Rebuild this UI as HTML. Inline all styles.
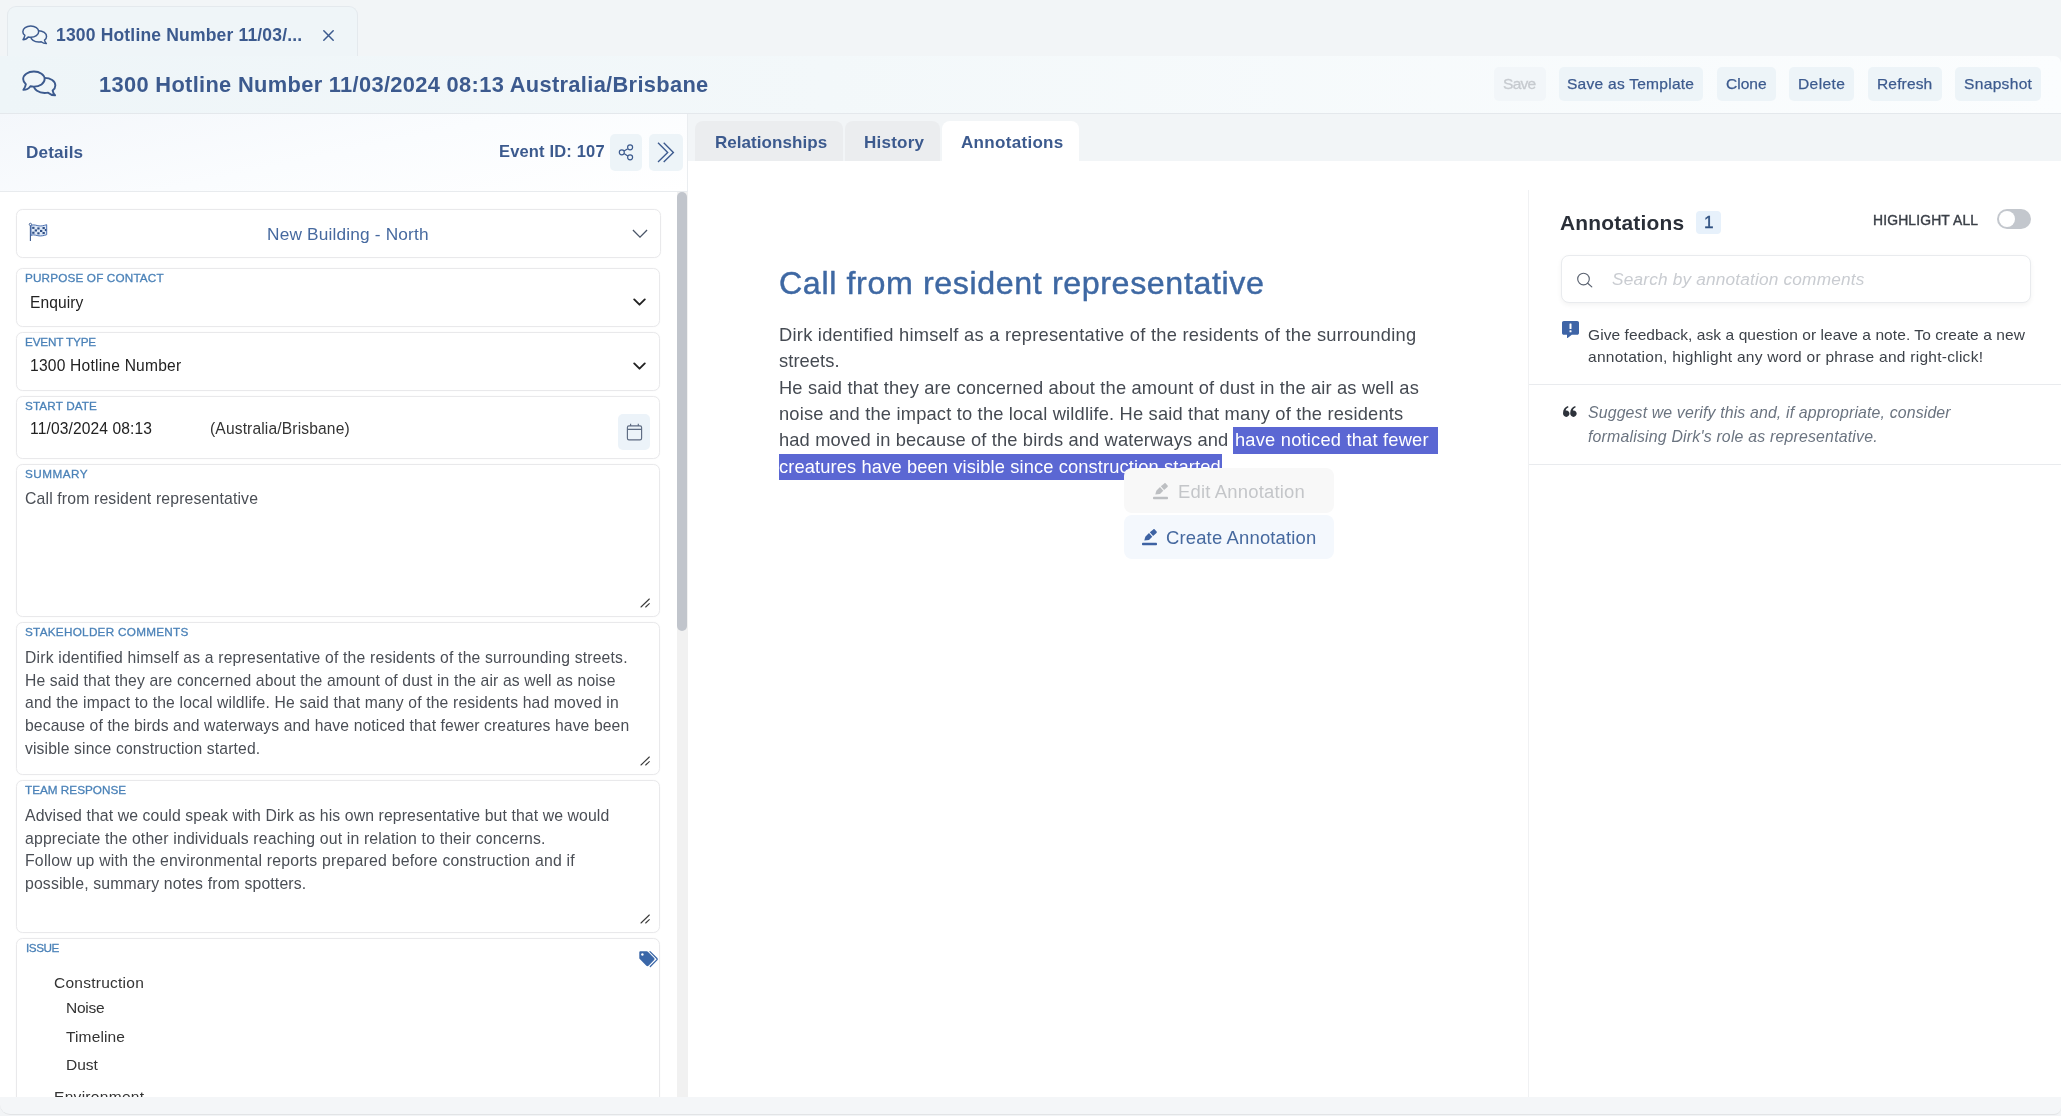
<!DOCTYPE html>
<html lang="en">
<head>
<meta charset="utf-8">
<title>1300 Hotline Number 11/03/2024 08:13 Australia/Brisbane</title>
<style>
*{box-sizing:border-box;margin:0;padding:0}
html,body{width:2061px;height:1116px;overflow:hidden}
body{position:relative;background:#f2f5f7;font-family:"Liberation Sans",Arial,sans-serif;color:#333}
.abs{position:absolute}
.t{position:absolute;white-space:nowrap;display:block;z-index:2;will-change:transform}
#m_edit,#m_create{z-index:6}
#cover{left:0;top:1097.3px;width:2061px;height:18.7px;background:#f2f4f6;z-index:8}
#cover i{position:absolute;left:0;top:0;width:2060.5px;height:17.5px;background:#f4f6f8;border-bottom:1px solid #e2e4e6;border-radius:0 0 7px 10px}
svg{position:absolute;overflow:visible}
#toptab{left:7px;top:6px;width:351px;height:52px;background:#eff5f8;border:1px solid #e4e9ed;border-bottom:none;border-radius:9px 9px 0 0}
#header{left:0;top:55.5px;width:2060.5px;height:58px;background:linear-gradient(90deg,#eef5f8 0%,#f3f8fa 40%,#fbfdfe 100%);border-bottom:1px solid #e4e8ec;border-radius:0 7px 0 0}
.btn{position:absolute;top:66.5px;height:34px;border-radius:5px;background:#edf4f8}
#main{left:0;top:114px;width:2060.5px;height:983.3px;background:#fff;overflow:hidden}
#leftpanel{left:0;top:0;width:688px;height:984px;border-right:1px solid #eaedf0;background:#fff}
#dethead{left:0;top:0;width:687px;height:77.5px;background:linear-gradient(168deg,#f4f7fb 0%,#fafcfe 50%,#ffffff 100%);border-bottom:1px solid #e8ebee}
.ibtn{position:absolute;top:20px;height:36.5px;border-radius:5px;background:#edf4f8}
.box{position:absolute;left:16px;width:643.5px;border:1px solid #e9e9eb;border-radius:6.5px;background:#fff;box-shadow:0 0 2px rgba(0,0,0,.03)}
#track{left:676.6px;top:78px;width:11px;height:905px;background:#f1f1f1}
#thumb{left:676.8px;top:78px;width:10px;height:439px;background:#c1c5cc;border-radius:5px}
#tabstrip{left:688px;top:0;width:1373px;height:47px;background:#f2f5f7}
.tab{position:absolute;top:7.2px;height:40px;border-radius:8px 8px 0 0;background:#ebedef}
.tab.on{background:#fff}
#vdiv{left:1528px;top:76px;width:1px;height:907px;background:#f0f1f3}
.hdiv{position:absolute;left:1529px;width:532px;height:1px;background:#e9ebee}
.hl{position:absolute;background:#5b67d3}
.menu{z-index:5;position:absolute;left:1123.5px;width:210.5px;border-radius:8px}
#search{left:1560.5px;top:254.5px;width:470px;height:48.5px;border:1px solid #e9ebee;border-radius:8px;background:#fff;box-shadow:0 2px 5px rgba(0,0,0,.05)}
#badge{left:1696px;top:210.5px;width:25px;height:23.5px;border-radius:4px;background:#e7f1fb}
#toggle{left:1997px;top:209px;width:33.5px;height:20px;border-radius:10px;background:#c3c7cd}
#knob{left:1999px;top:210.8px;width:16px;height:16px;border-radius:50%;background:#fff}
</style>
</head>
<body>
<!-- top document tab -->
<div class="abs" id="toptab"></div>
<!-- header bar -->
<div class="abs" id="header"></div>
<div class="btn" style="left:1493.5px;width:52px;background:#f2f6f9"></div>
<div class="btn" style="left:1558.5px;width:144.5px"></div>
<div class="btn" style="left:1716.5px;width:59.5px"></div>
<div class="btn" style="left:1788.5px;width:65.5px"></div>
<div class="btn" style="left:1867.5px;width:74px"></div>
<div class="btn" style="left:1955px;width:85.5px"></div>

<!-- main area -->
<div class="abs" id="main">
  <div class="abs" id="tabstrip">
    <div class="tab" style="left:7px;width:147.5px"></div>
    <div class="tab" style="left:157px;width:95px"></div>
    <div class="tab on" style="left:253.5px;width:137.5px"></div>
  </div>
  <div class="abs" id="leftpanel">
    <div class="abs" id="dethead">
      <div class="ibtn" style="left:609.5px;width:32.5px"></div>
      <div class="ibtn" style="left:648.5px;width:34.5px"></div>
    </div>
    <div class="box" style="top:95px;height:49px;left:15.5px;width:645.5px"></div>
    <div class="box" style="top:154px;height:58.5px"></div>
    <div class="box" style="top:218px;height:58.5px"></div>
    <div class="box" style="top:282px;height:62.5px"></div>
    <div class="box" style="top:349.5px;height:153px"></div>
    <div class="box" style="top:507.5px;height:153px"></div>
    <div class="box" style="top:665.5px;height:153px"></div>
    <div class="box" style="top:823.5px;height:200px"></div>
    <div class="abs" style="left:618.3px;top:299.7px;width:32px;height:36.6px;border-radius:5px;background:#ecf3f9"></div>
    <div class="abs" id="track"></div>
    <div class="abs" id="thumb"></div>
  </div>
  <div class="abs" id="vdiv"></div>
  <div class="hdiv" style="top:270px"></div>
  <div class="hdiv" style="top:350px"></div>
</div>

<!-- selection highlight -->
<div class="hl" style="left:1233px;top:427px;width:205px;height:26.5px"></div>
<div class="hl" style="left:779px;top:453.5px;width:442.7px;height:26.3px"></div>

<span class="t" id="tabtxt" style="left:56.00px;top:25.00px;font-size:17.53px;line-height:20px;color:#3c5a8e;letter-spacing:0.168px;font-weight:bold;">1300 Hotline Number 11/03/...</span>
<span class="t" id="title" style="left:99.40px;top:72.00px;font-size:21.84px;line-height:25px;color:#3c5a8e;letter-spacing:0.333px;font-weight:bold;">1300 Hotline Number 11/03/2024 08:13 Australia/Brisbane</span>
<span class="t" id="b_save" style="left:1502.60px;top:75.00px;font-size:15.55px;line-height:17px;color:#c6cacf;letter-spacing:-0.740px;-webkit-text-stroke:0.30px #c6cacf;">Save</span>
<span class="t" id="b_sat" style="left:1567.40px;top:75.00px;font-size:15.55px;line-height:17px;color:#3c5a8e;letter-spacing:0.246px;-webkit-text-stroke:0.25px #3c5a8e;">Save as Template</span>
<span class="t" id="b_clone" style="left:1725.80px;top:75.00px;font-size:15.55px;line-height:17px;color:#3c5a8e;letter-spacing:0.001px;-webkit-text-stroke:0.25px #3c5a8e;">Clone</span>
<span class="t" id="b_del" style="left:1798.00px;top:75.00px;font-size:15.55px;line-height:17px;color:#3c5a8e;letter-spacing:0.377px;-webkit-text-stroke:0.25px #3c5a8e;">Delete</span>
<span class="t" id="b_ref" style="left:1876.70px;top:75.00px;font-size:15.55px;line-height:17px;color:#3c5a8e;letter-spacing:0.132px;-webkit-text-stroke:0.25px #3c5a8e;">Refresh</span>
<span class="t" id="b_snap" style="left:1963.80px;top:75.00px;font-size:15.55px;line-height:17px;color:#3c5a8e;letter-spacing:0.321px;-webkit-text-stroke:0.25px #3c5a8e;">Snapshot</span>
<span class="t" id="details" style="left:25.50px;top:143.00px;font-size:17.13px;line-height:19px;color:#3c5a8e;letter-spacing:0.168px;font-weight:bold;">Details</span>
<span class="t" id="evid" style="left:498.90px;top:142.00px;font-size:16.50px;line-height:18px;color:#3c5a8e;letter-spacing:0.168px;font-weight:bold;">Event ID: 107</span>
<span class="t" id="proj" style="left:266.60px;top:224.00px;font-size:17.25px;line-height:20px;color:#46699f;letter-spacing:0.176px;">New Building - North</span>
<span class="t" id="l_purpose" style="left:25.30px;top:271.00px;font-size:11.73px;line-height:13px;color:#4b82b8;letter-spacing:0.161px;-webkit-text-stroke:0.30px #4b82b8;">PURPOSE OF CONTACT</span>
<span class="t" id="l_evtype" style="left:25.30px;top:335.00px;font-size:11.73px;line-height:13px;color:#4b82b8;letter-spacing:-0.152px;-webkit-text-stroke:0.30px #4b82b8;">EVENT TYPE</span>
<span class="t" id="l_start" style="left:25.30px;top:399.00px;font-size:11.73px;line-height:13px;color:#4b82b8;letter-spacing:0.131px;-webkit-text-stroke:0.30px #4b82b8;">START DATE</span>
<span class="t" id="l_sum" style="left:25.30px;top:467.00px;font-size:11.73px;line-height:13px;color:#4b82b8;letter-spacing:0.495px;-webkit-text-stroke:0.30px #4b82b8;">SUMMARY</span>
<span class="t" id="l_stk" style="left:25.30px;top:625.00px;font-size:11.73px;line-height:13px;color:#4b82b8;letter-spacing:0.279px;-webkit-text-stroke:0.30px #4b82b8;">STAKEHOLDER COMMENTS</span>
<span class="t" id="l_team" style="left:25.30px;top:783.00px;font-size:11.73px;line-height:13px;color:#4b82b8;letter-spacing:0.008px;-webkit-text-stroke:0.30px #4b82b8;">TEAM RESPONSE</span>
<span class="t" id="l_issue" style="left:25.50px;top:941.00px;font-size:11.73px;line-height:13px;color:#4b82b8;letter-spacing:-0.449px;-webkit-text-stroke:0.30px #4b82b8;">ISSUE</span>
<span class="t" id="v_enq" style="left:29.50px;top:294.00px;font-size:15.58px;line-height:17px;color:#222;letter-spacing:0.099px;">Enquiry</span>
<span class="t" id="v_evt" style="left:29.90px;top:357.00px;font-size:15.58px;line-height:17px;color:#222;letter-spacing:0.219px;">1300 Hotline Number</span>
<span class="t" id="v_date" style="left:29.90px;top:420.00px;font-size:15.58px;line-height:17px;color:#222;letter-spacing:0.127px;">11/03/2024 08:13</span>
<span class="t" id="v_tz" style="left:209.60px;top:420.00px;font-size:15.58px;line-height:17px;color:#333;letter-spacing:0.150px;">(Australia/Brisbane)</span>
<span class="t" id="sum" style="left:25.00px;top:490.00px;font-size:15.79px;line-height:17px;color:#4a4e55;letter-spacing:0.152px;">Call from resident representative</span>
<span class="t" id="stk0" style="left:25.00px;top:649.00px;font-size:15.69px;line-height:17px;color:#4a4e55;letter-spacing:0.200px;">Dirk identified himself as a representative of the residents of the surrounding streets.</span>
<span class="t" id="stk1" style="left:25.00px;top:672.00px;font-size:15.69px;line-height:17px;color:#4a4e55;letter-spacing:0.128px;">He said that they are concerned about the amount of dust in the air as well as noise</span>
<span class="t" id="stk2" style="left:25.00px;top:694.00px;font-size:15.69px;line-height:17px;color:#4a4e55;letter-spacing:0.164px;">and the impact to the local wildlife. He said that many of the residents had moved in</span>
<span class="t" id="stk3" style="left:25.00px;top:717.00px;font-size:15.69px;line-height:17px;color:#4a4e55;letter-spacing:0.116px;">because of the birds and waterways and have noticed that fewer creatures have been</span>
<span class="t" id="stk4" style="left:25.00px;top:740.00px;font-size:15.69px;line-height:17px;color:#4a4e55;letter-spacing:0.145px;">visible since construction started.</span>
<span class="t" id="tm0" style="left:25.00px;top:807.00px;font-size:15.82px;line-height:17px;color:#4a4e55;letter-spacing:0.096px;">Advised that we could speak with Dirk as his own representative but that we would</span>
<span class="t" id="tm1" style="left:25.00px;top:830.00px;font-size:15.82px;line-height:17px;color:#4a4e55;letter-spacing:0.154px;">appreciate the other individuals reaching out in relation to their concerns.</span>
<span class="t" id="tm2" style="left:25.00px;top:852.00px;font-size:15.82px;line-height:17px;color:#4a4e55;letter-spacing:0.215px;">Follow up with the environmental reports prepared before construction and if</span>
<span class="t" id="tm3" style="left:25.00px;top:875.00px;font-size:15.82px;line-height:17px;color:#4a4e55;letter-spacing:0.142px;">possible, summary notes from spotters.</span>
<span class="t" id="i_con" style="left:53.60px;top:974.00px;font-size:15.53px;line-height:17px;color:#333;letter-spacing:0.244px;">Construction</span>
<span class="t" id="i_noise" style="left:66.40px;top:999.00px;font-size:15.53px;line-height:17px;color:#333;letter-spacing:-0.245px;">Noise</span>
<span class="t" id="i_time" style="left:66.40px;top:1028.00px;font-size:15.53px;line-height:17px;color:#333;letter-spacing:0.133px;">Timeline</span>
<span class="t" id="i_dust" style="left:66.40px;top:1056.00px;font-size:15.53px;line-height:17px;color:#333;letter-spacing:-0.007px;">Dust</span>
<span class="t" id="i_env" style="left:53.60px;top:1088.00px;font-size:15.53px;line-height:17px;color:#333;letter-spacing:0.298px;">Environment</span>
<span class="t" id="tab_rel" style="left:715.00px;top:133.00px;font-size:17.05px;line-height:19px;color:#3c5a8e;letter-spacing:0.036px;font-weight:bold;">Relationships</span>
<span class="t" id="tab_his" style="left:864.00px;top:133.00px;font-size:17.05px;line-height:19px;color:#3c5a8e;letter-spacing:0.219px;font-weight:bold;">History</span>
<span class="t" id="tab_ann" style="left:960.80px;top:133.00px;font-size:17.05px;line-height:19px;color:#3c5a8e;letter-spacing:0.296px;font-weight:bold;">Annotations</span>
<span class="t" id="h1" style="left:779.40px;top:265.00px;font-size:32.20px;line-height:36px;color:#3e68a3;letter-spacing:0.618px;-webkit-text-stroke:0.45px #3e68a3;">Call from resident representative</span>
<span class="t" id="bd0" style="left:779.40px;top:324.00px;font-size:18.31px;line-height:21px;color:#454a52;letter-spacing:0.253px;">Dirk identified himself as a representative of the residents of the surrounding</span>
<span class="t" id="bd1" style="left:779.40px;top:350.00px;font-size:18.31px;line-height:21px;color:#454a52;letter-spacing:0.073px;">streets.</span>
<span class="t" id="bd2" style="left:779.40px;top:377.00px;font-size:18.31px;line-height:21px;color:#454a52;letter-spacing:0.159px;">He said that they are concerned about the amount of dust in the air as well as</span>
<span class="t" id="bd3" style="left:779.40px;top:403.00px;font-size:18.31px;line-height:21px;color:#454a52;letter-spacing:0.181px;">noise and the impact to the local wildlife. He said that many of the residents</span>
<span class="t" id="bd4" style="left:779.40px;top:429.00px;font-size:18.31px;line-height:21px;color:#454a52;letter-spacing:0.136px;">had moved in because of the birds and waterways and</span>
<span class="t" id="hl1" style="left:1234.50px;top:429.00px;font-size:18.31px;line-height:21px;color:#fff;letter-spacing:0.199px;">have noticed that fewer</span>
<span class="t" id="hl2" style="left:779.40px;top:456.00px;font-size:18.31px;line-height:21px;color:#fff;letter-spacing:0.121px;">creatures have been visible since construction started</span>
<span class="t" id="m_edit" style="left:1178.00px;top:481.00px;font-size:18.45px;line-height:21px;color:#c4c6c9;letter-spacing:0.191px;">Edit Annotation</span>
<span class="t" id="m_create" style="left:1166.40px;top:527.00px;font-size:18.45px;line-height:21px;color:#46699f;letter-spacing:0.163px;">Create Annotation</span>
<span class="t" id="a_h" style="left:1559.90px;top:211.00px;font-size:20.94px;line-height:23px;color:#2a2f38;letter-spacing:0.200px;font-weight:bold;">Annotations</span>
<span class="t" id="a_n" style="left:1704.20px;top:212.00px;font-size:17.30px;line-height:20px;color:#2f5080;letter-spacing:0.000px;-webkit-text-stroke:0.35px #2f5080;">1</span>
<span class="t" id="a_hl" style="left:1872.80px;top:212.00px;font-size:13.91px;line-height:16px;color:#3a3f47;letter-spacing:0.144px;-webkit-text-stroke:0.40px #3a3f47;">HIGHLIGHT ALL</span>
<span class="t" id="a_ph" style="left:1611.70px;top:269.00px;font-size:17.25px;line-height:20px;color:#c9ccd1;letter-spacing:0.176px;font-style:italic;">Search by annotation comments</span>
<span class="t" id="a_i1" style="left:1588.20px;top:326.00px;font-size:15.53px;line-height:17px;color:#3d4249;letter-spacing:0.068px;">Give feedback, ask a question or leave a note. To create a new</span>
<span class="t" id="a_i2" style="left:1588.20px;top:348.00px;font-size:15.53px;line-height:17px;color:#3d4249;letter-spacing:0.261px;">annotation, highlight any word or phrase and right-click!</span>
<span class="t" id="a_q1" style="left:1588.20px;top:404.00px;font-size:15.86px;line-height:17px;color:#6b7480;letter-spacing:0.144px;font-style:italic;">Suggest we verify this and, if appropriate, consider</span>
<span class="t" id="a_q2" style="left:1588.20px;top:428.00px;font-size:15.86px;line-height:17px;color:#6b7480;letter-spacing:0.197px;font-style:italic;">formalising Dirk&#39;s role as representative.</span>

<!-- context menu -->
<div class="menu" style="top:468px;height:44.5px;background:#f8f8f8"></div>
<div class="menu" style="top:514.5px;height:44.5px;background:#f4f8fd"></div>
<!--MENUTEXT-->

<!-- annotations panel widgets -->
<div class="abs" id="badge"></div>
<div class="abs" id="toggle"></div><div class="abs" id="knob"></div>
<div class="abs" id="search"></div>

<!-- comments icon (tab) -->
<svg style="left:22.1px;top:24.8px;z-index:4" width="25.4" height="19.6" viewBox="0 0 34.5 26.6" fill="none" stroke="#3c5a8e" stroke-width="2" stroke-linejoin="round">
<path d="M22.6 7.85C28.54 7.85 33.35 11.25 33.35 15.45c0 1.95-1.05 3.75-2.75 5.1.4 2.05 1.4 3.75 2.5 4.75-2.8 0-5.3-1.1-7-2.6-1.1.25-2.3.35-3.5.35-5.94 0-10.75-3.4-10.75-7.6s4.810-7.600 10.750-7.600Z"/>
<path fill="#f0f6f9" d="M11.9 1.45C5.96 1.45 1.15 4.85 1.15 9.05c0 1.95 1.05 3.75 2.75 5.1-.4 2.050-1.4 4.150-2.5 5.750 2.800 0 5.300-1.100 7-3.600 1.100.250 2.300.350 3.500.350 5.940 0 10.750-3.400 10.750-7.600S17.840 1.450 11.900 1.450Z"/>
</svg>
<!-- tab close -->
<svg style="left:323px;top:29.5px;z-index:4" width="11" height="11" viewBox="0 0 11 11" stroke="#3c5a8e" stroke-width="1.5" stroke-linecap="round"><path d="M.8.8l9.400 9.400M10.200.8L.8 10.200"/></svg>
<!-- comments icon (header) -->
<svg style="left:22.3px;top:69.6px;z-index:4" width="34.5" height="26.6" viewBox="0 0 34.5 26.6" fill="none" stroke="#3c5a8e" stroke-width="1.9" stroke-linejoin="round">
<path d="M22.6 7.85C28.54 7.85 33.35 11.25 33.35 15.45c0 1.95-1.05 3.75-2.75 5.1.4 2.05 1.4 3.75 2.5 4.75-2.8 0-5.3-1.1-7-2.6-1.1.25-2.3.35-3.5.35-5.94 0-10.75-3.4-10.75-7.6s4.810-7.600 10.750-7.600Z"/>
<path fill="#f0f6f9" d="M11.9 1.45C5.96 1.45 1.15 4.85 1.15 9.05c0 1.95 1.05 3.75 2.75 5.1-.4 2.050-1.4 4.150-2.5 5.750 2.800 0 5.300-1.100 7-3.600 1.100.250 2.300.350 3.500.350 5.940 0 10.750-3.400 10.750-7.600S17.840 1.450 11.900 1.450Z"/>
</svg>
<!-- share icon -->
<svg style="left:617px;top:143px;z-index:4" width="18" height="19" viewBox="617 143 18 19" fill="none" stroke="#3c5a8e" stroke-width="1.2">
<path d="M624 151.100l3.800-2.400M624 153.500l3.800 2.400"/>
<circle cx="630.100" cy="147.300" r="2.500" fill="#edf4f8"/><circle cx="621.800" cy="152.300" r="2.500" fill="#edf4f8"/><circle cx="630.100" cy="157.300" r="2.500" fill="#edf4f8"/>
</svg>
<!-- double chevron -->
<svg style="left:657px;top:142px;z-index:4" width="18" height="21" viewBox="657 142 18 21" fill="none" stroke="#3c5a8e" stroke-width="1.35" stroke-linecap="square">
<path d="M658.5 143.3l9.200 9.100-9.200 9.100M664.200 143.300l9.200 9.100-9.200 9.100"/>
</svg>
<!-- checkered flag -->
<svg style="left:28px;top:222px;z-index:4" width="21" height="20" viewBox="28 222 21 20">
<path d="M30.4 225.500v15.500" stroke="#3c5a8e" stroke-width="1.1" fill="none"/>
<circle cx="30.4" cy="224.400" r="1.150" fill="#fff" stroke="#3c5a8e" stroke-width=".9"/>
<path d="M31 225.300c3-1.100 5.500.300 8 .600s5-.400 7.700-1.200v10c-2.700.800-5.200 1.500-7.700 1.200s-5-1.700-8-.600z" fill="#dfe9f6" stroke="#4a6fb0" stroke-width="1"/>
<g fill="#2f4f86">
<rect x="32.2" y="226.800" width="2.300" height="2.100"/><rect x="37.300" y="227.400" width="2.300" height="2.100"/><rect x="42.500" y="227" width="2.300" height="2.100"/>
<rect x="34.700" y="229.400" width="2.300" height="2.100"/><rect x="40" y="229.900" width="2.300" height="2.100"/><rect x="44.800" y="229" width="1.600" height="2.100"/>
<rect x="32.200" y="231.700" width="2.300" height="2.100"/><rect x="37.300" y="232.300" width="2.300" height="2.100"/><rect x="42.500" y="232" width="2.300" height="2.100"/>
</g>
</svg>
<!-- project chevron -->
<svg style="left:632px;top:229px;z-index:4" width="16" height="10" viewBox="632 229 16 10" fill="none" stroke="#4a5568" stroke-width="1.3" stroke-linecap="square"><path d="M633.400 230.500l6.600 6.600 6.600-6.600"/></svg>
<!-- select chevrons -->
<svg style="left:632px;top:297px;z-index:4" width="14" height="10" viewBox="632 297 14 10" fill="none" stroke="#222" stroke-width="1.9" stroke-linecap="round" stroke-linejoin="round"><path d="M634.200 299.400l5.300 5.300 5.300-5.300"/></svg>
<svg style="left:632px;top:360.600px;z-index:4" width="14" height="10" viewBox="632 297 14 10" fill="none" stroke="#222" stroke-width="1.9" stroke-linecap="round" stroke-linejoin="round"><path d="M634.200 299.400l5.300 5.300 5.300-5.300"/></svg>
<!-- calendar -->
<svg style="left:626px;top:423px;z-index:4" width="17" height="18" viewBox="626 423 17 18" fill="none" stroke="#5d6b82" stroke-width="1.15">
<rect x="627.400" y="425.800" width="14.200" height="14" rx="1.600"/><path d="M627.400 429.300h14.200M630.600 423.700v2.200M638.300 423.700v2.200"/>
</svg>
<!-- resize handles -->
<svg style="left:640px;top:598px;z-index:4" width="11" height="11" viewBox="640 598 11 11" fill="none" stroke="#3a3a3a" stroke-width="1.1" stroke-linecap="round"><path d="M641 607l8.300-8M645.700 607l3.600-3.400"/></svg>
<svg style="left:640px;top:756px;z-index:4" width="11" height="11" viewBox="640 598 11 11" fill="none" stroke="#3a3a3a" stroke-width="1.1" stroke-linecap="round"><path d="M641 607l8.300-8M645.700 607l3.600-3.400"/></svg>
<svg style="left:640px;top:914px;z-index:4" width="11" height="11" viewBox="640 598 11 11" fill="none" stroke="#3a3a3a" stroke-width="1.1" stroke-linecap="round"><path d="M641 607l8.300-8M645.700 607l3.600-3.400"/></svg>
<!-- tags -->
<svg style="left:638.5px;top:950.5px;z-index:4" width="19.500" height="16" viewBox="0 0 19.5 16">
<path d="M11 .6l6.900 6.900c.4.400.4 1 0 1.400L11.300 15.500" fill="none" stroke="#3a67a8" stroke-width="1.3" stroke-linecap="round"/>
<path d="M.3 1.500C.3.800.800.300 1.500.300h6.300c.400 0 .800.200 1.100.500l6.200 6.200c.600.600.600 1.500 0 2.100l-5.600 5.600c-.600.600-1.500.600-2.100 0L1 8.300C.500 7.900.300 7.400.300 6.900z" fill="#3a67a8" stroke="#fff" stroke-width=".8" paint-order="stroke"/>
<circle cx="3.400" cy="3.500" r="1.200" fill="#fff"/>
</svg>
<!-- edit annotation icon -->
<svg style="left:1153.2px;top:483.300px;z-index:6" width="15" height="16.200" viewBox="0 0 15 16.200" fill="#bdbfc2">
<rect x="0" y="13.800" width="15" height="2.400" rx=".8"/><path d="M11.300.4c.4-.4 1-.4 1.400 0l1.900 2.100c.4.400.3 1-.1 1.400l-3.400 3-3.300-3.600z"/><path d="M7 4.100l3.300 3.600-3.300 3.300-4.700.4 1-3.700z"/>
</svg>
<!-- create annotation icon -->
<svg style="left:1142px;top:529px;z-index:6" width="15" height="16.200" viewBox="0 0 15 16.200" fill="#3d62a3">
<rect x="0" y="13.800" width="15" height="2.400" rx=".8"/><path d="M11.300.4c.4-.4 1-.4 1.400 0l1.900 2.100c.4.400.3 1-.1 1.400l-3.400 3-3.300-3.600z"/><path d="M7 4.100l3.300 3.600-3.300 3.300-4.700.4 1-3.700z"/>
</svg>
<!-- search icon -->
<svg style="left:1576px;top:271px;z-index:4" width="18" height="18" viewBox="1576 271 18 18" fill="none" stroke="#5a6270" stroke-width="1.15" stroke-linecap="round"><circle cx="1583.500" cy="279" r="5.800"/><path d="M1587.700 283.200l4.100 3.700"/></svg>
<!-- info bubble -->
<svg style="left:1561.800px;top:321px;z-index:4" width="17" height="17.500" viewBox="0 0 17 17.500">
<path d="M1.800 0h13.400c1 0 1.800.8 1.800 1.800v10.100c0 1-.8 1.800-1.800 1.800H9.800L5.600 17c-.3.200-.6 0-.6-.3v-3H1.800c-1 0-1.800-.8-1.800-1.800V1.800C0 .8.800 0 1.800 0z" fill="#3e64a6"/>
<rect x="7.500" y="2.500" width="2" height="5.500" rx=".5" fill="#fff"/><rect x="7.500" y="9.300" width="2" height="2" rx=".5" fill="#fff"/>
</svg>
<!-- quote icon -->
<svg style="left:1563px;top:405.500px;z-index:4" width="13.400" height="11" viewBox="0 0 13.400 11" fill="#2e333b">
<path d="M0 7.300C0 3.300 2 .8 5 0l.5 1.200C3.700 2 2.800 3.200 2.700 4.500c.2-.1.500-.1.800-.1 1.700 0 3 1.400 3 3.200S5.100 10.900 3.300 10.900 0 9.400 0 7.300z"/>
<path d="M7.200 7.300c0-4 2-6.500 5-7.300l.5 1.200c-1.800.8-2.700 2-2.800 3.300.2-.1.500-.1.800-.1 1.700 0 3 1.400 3 3.200s-1.400 3.300-3.200 3.300-3.300-1.500-3.300-3.600z"/>
</svg>

<div class="abs" id="cover"><i></i></div>
</body>
</html>
